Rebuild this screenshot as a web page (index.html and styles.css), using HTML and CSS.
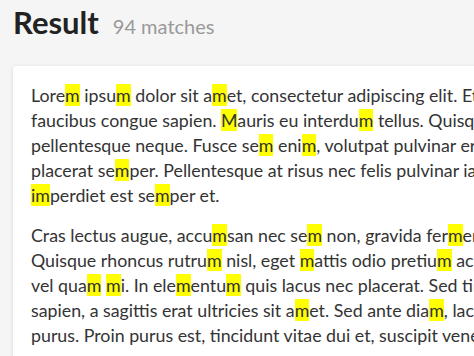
FILE: index.html
```html
<!DOCTYPE html>
<html lang="en">
<head>
<meta charset="utf-8">
<title>Result</title>
<link rel="stylesheet" href="styles.css">
</head>
<body>
<div class="page">
  <header class="head">
    <h1 class="title">Result</h1>
    <span class="count">94 matches</span>
  </header>
  <section class="card">
    <p class="para">Lore<mark>m</mark> ipsu<mark>m</mark> dolor sit a<mark>m</mark>et, consectetur adipiscing elit. Etiam vel<br>faucibus congue sapien. <mark>M</mark>auris eu interdu<mark>m</mark> tellus. Quisque non<br>pellentesque neque. Fusce se<mark>m</mark> eni<mark>m</mark>, volutpat pulvinar eros vitae<br>placerat se<mark>m</mark>per. Pellentesque at risus nec felis pulvinar iaculis<br><mark>im</mark>perdiet est se<mark>m</mark>per et.</p>
    <p class="para">Cras lectus augue, accu<mark>m</mark>san nec se<mark>m</mark> non, gravida fer<mark>m</mark>entum<br>Quisque rhoncus rutru<mark>m</mark> nisl, eget <mark>m</mark>attis odio pretiu<mark>m</mark> ac<br>vel qua<mark>m</mark> <mark>m</mark>i. In ele<mark>m</mark>entu<mark>m</mark> quis lacus nec placerat. Sed tincidunt<br>sapien, a sagittis erat ultricies sit a<mark>m</mark>et. Sed ante dia<mark>m</mark>, lacinia<br>purus. Proin purus est, tincidunt vitae dui et, suscipit venenatis</p>
  </section>
</div>
</body>
</html>
```
FILE: styles.css
```css
html, body {
  margin: 0;
  padding: 0;
  background: #f5f5f5;
  overflow: hidden;
}
body {
  width: 474px;
  height: 356px;
  font-family: Lato, "Open Sans", sans-serif;
  color: #333;
}
.page {
  padding: 0 0 0 13px;
}
.head {
  display: flex;
  align-items: baseline;
  gap: 14px;
  height: 66px;
}
.title {
  margin: 0;
  font-size: 31px;
  font-weight: 700;
  line-height: 45px;
  color: #222;
}
.count {
  font-size: 20px;
  color: #999;
}
.card {
  width: 640px;
  background: #fff;
  border-radius: 4px;
  box-shadow: 0 1px 4px rgba(0, 0, 0, 0.12);
  padding: 17px 18px 20px 18px;
  font-size: 17.8px;
  line-height: 25px;
  color: #333;
}
.para {
  margin: 0 0 15px 0;
  white-space: nowrap;
}
mark {
  background: #ffff00;
  color: inherit;
}
```
